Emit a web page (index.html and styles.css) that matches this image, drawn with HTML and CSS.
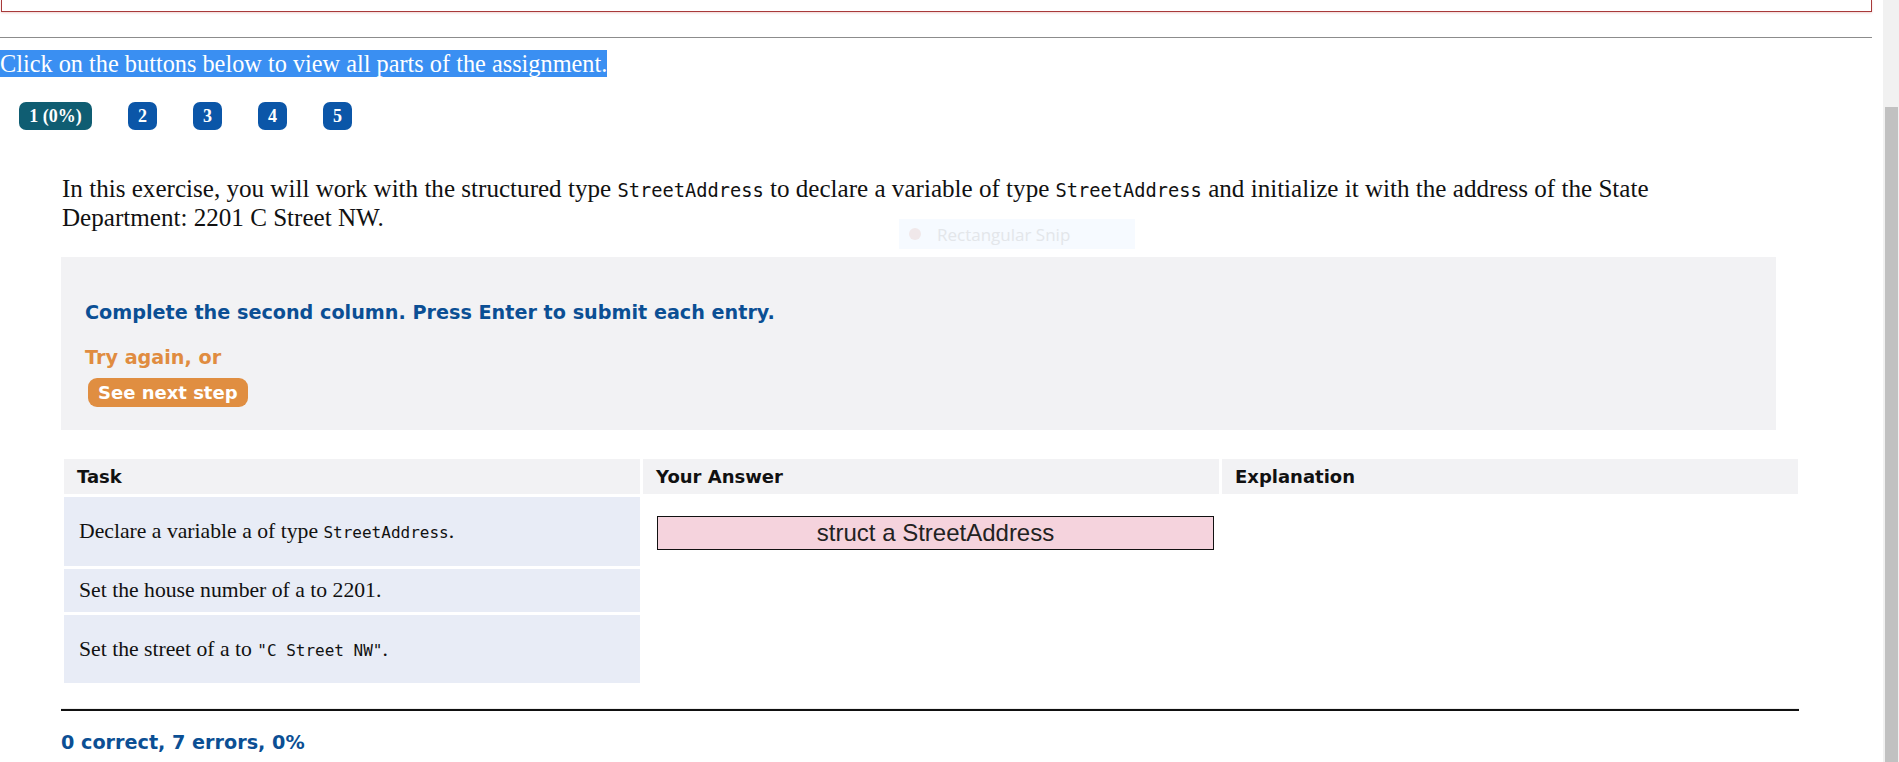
FILE: index.html
```html
<!DOCTYPE html>
<html>
<head>
<meta charset="utf-8">
<link rel="stylesheet" href="styles.css">
</head>
<body>
<div class="page">
  <div class="main">
    <div class="topbox"></div>
    <div class="rule"></div>
    <p class="intro"><span class="sel">Click on the buttons below to view all parts of the assignment.</span></p>
    <div class="parts">
      <span class="part part-current">1 (0%)</span>
      <span class="part">2</span>
      <span class="part">3</span>
      <span class="part">4</span>
      <span class="part">5</span>
    </div>
    <p class="lead">In this exercise, you will work with the structured type <code>StreetAddress</code> to declare a variable of type <code>StreetAddress</code> and initialize it with the address of the State Department: 2201 C Street NW.</p>
    <div class="snip"><span class="snip-dot"></span><span class="snip-text">Rectangular Snip</span></div>
    <div class="instructions">
      <p class="inst-title">Complete the second column. Press Enter to submit each entry.</p>
      <p class="try">Try again, or</p>
      <span class="next-btn">See next step</span>
    </div>
    <table class="tasks">
      <thead>
        <tr><th>Task</th><th>Your Answer</th><th>Explanation</th></tr>
      </thead>
      <tbody>
        <tr class="r1">
          <td class="task">Declare a variable a of type <code>StreetAddress</code>.</td>
          <td class="answer"><div class="input">struct a StreetAddress</div></td>
          <td></td>
        </tr>
        <tr class="r2">
          <td class="task">Set the house number of a to 2201.</td>
          <td></td>
          <td></td>
        </tr>
        <tr class="r3">
          <td class="task">Set the street of a to <code>"C Street NW"</code>.</td>
          <td></td>
          <td></td>
        </tr>
      </tbody>
    </table>
    <div class="bottom-rule"></div>
    <p class="score">0 correct, 7 errors, 0%</p>
  </div>
  <div class="scrollbar"><div class="thumb"></div></div>
</div>
</body>
</html>
```
FILE: styles.css
```css
html, body {
  margin: 0;
  padding: 0;
  background: #ffffff;
  overflow: hidden;
}
body {
  font-family: "Liberation Serif", serif;
  color: #111;
}
.page {
  display: flex;
  height: 762px;
}
.main {
  flex: 1;
  position: relative;
  min-width: 0;
}
.topbox {
  height: 11px;
  margin: 0 11px 0 1px;
  border: 1px solid #a83a3a;
  border-top: none;
  box-shadow: 0 1px 2px rgba(200, 80, 80, 0.25);
}
.rule {
  height: 1px;
  background: #8c8c8c;
  margin: 25px 11px 0 0;
}
.intro {
  margin: 12px 0 0 0;
  font-size: 24.3px;
  line-height: 27px;
}
.sel {
  background: #3a8ff2;
  color: #fff;
}
.parts {
  display: flex;
  gap: 36px;
  margin: 25px 0 0 19px;
}
.part {
  display: inline-flex;
  align-items: center;
  justify-content: center;
  height: 28px;
  min-width: 29px;
  box-sizing: border-box;
  padding: 0 8px;
  border-radius: 7px;
  background: #0b56a8;
  color: #fff;
  font-weight: bold;
  font-size: 18px;
}
.part-current {
  background: #0f5d72;
  width: 73px;
}
code {
  font-family: "DejaVu Sans Mono", monospace;
}
.lead {
  margin: 45px 0 0 62px;
  width: 1714px;
  font-size: 25.1px;
  line-height: 27px;
}
.lead code {
  font-size: 18.7px;
}
.snip {
  position: absolute;
  left: 899px;
  top: 219px;
  width: 236px;
  height: 30px;
  background: #f6faff;
  display: flex;
  align-items: center;
  font-family: "Open Sans", sans-serif;
  font-size: 17px;
  color: #e3e6ea;
}
.snip-dot {
  width: 12px;
  height: 12px;
  border-radius: 50%;
  background: #f0e8ea;
  margin: 0 16px 0 10px;
}
.instructions {
  margin: 26px 0 0 61px;
  width: 1715px;
  height: 173px;
  box-sizing: border-box;
  padding: 45px 0 0 24px;
  background: #f2f2f4;
  font-family: "DejaVu Sans", sans-serif;
  font-weight: bold;
}
.inst-title {
  margin: 0;
  color: #0b4f94;
  font-size: 19.2px;
  line-height: 22px;
}
.try {
  margin: 23px 0 0 0;
  color: #e08c40;
  font-size: 19.2px;
  line-height: 22px;
}
.next-btn {
  display: inline-flex;
  align-items: center;
  margin: 9px 0 0 3px;
  height: 29px;
  padding: 0 10px;
  border-radius: 9px;
  background: #e08e41;
  color: #fff;
  font-size: 18px;
}
.tasks {
  margin: 26px 0 0 61px;
  border-spacing: 3px;
  table-layout: fixed;
  width: 1740px;
}
.tasks th {
  height: 35px;
  padding: 0 0 0 13px;
  background: #f2f2f4;
  text-align: left;
  font-family: "DejaVu Sans", sans-serif;
  font-weight: bold;
  font-size: 18px;
  color: #111;
}
.tasks td {
  padding: 0;
  vertical-align: middle;
}
.tasks td.task {
  background: #e8ecf6;
  padding-left: 15px;
  font-size: 21.7px;
}
.tasks td.task code {
  font-size: 16px;
}
.r1 td { height: 69px; }
.r2 td { height: 43px; }
.r3 td { height: 68px; }
.answer {
  padding: 3px 5px 0 14px !important;
  box-sizing: border-box;
}
.input {
  height: 34px;
  box-sizing: border-box;
  border: 1px solid #111;
  background: #f5d3dd;
  display: flex;
  align-items: center;
  justify-content: center;
  font-family: "Liberation Sans", Arial, sans-serif;
  font-size: 24px;
  color: #222;
}
.bottom-rule {
  margin: 20px 0 0 61px;
  width: 1738px;
  height: 1px;
  background: #eeeeee;
  border-bottom: 2px solid #111;
  padding-top: 2px;
  background-clip: content-box;
}
.score {
  margin: 20px 0 0 61px;
  font-family: "DejaVu Sans", sans-serif;
  font-weight: bold;
  font-size: 19.2px;
  color: #0b4f94;
}
.scrollbar {
  width: 16px;
  background: #f1f1f1;
  display: flex;
  flex-direction: column;
  align-items: center;
}
.thumb {
  margin-top: 107px;
  width: 13px;
  flex: 1;
  background: #c1c1c1;
}
```
